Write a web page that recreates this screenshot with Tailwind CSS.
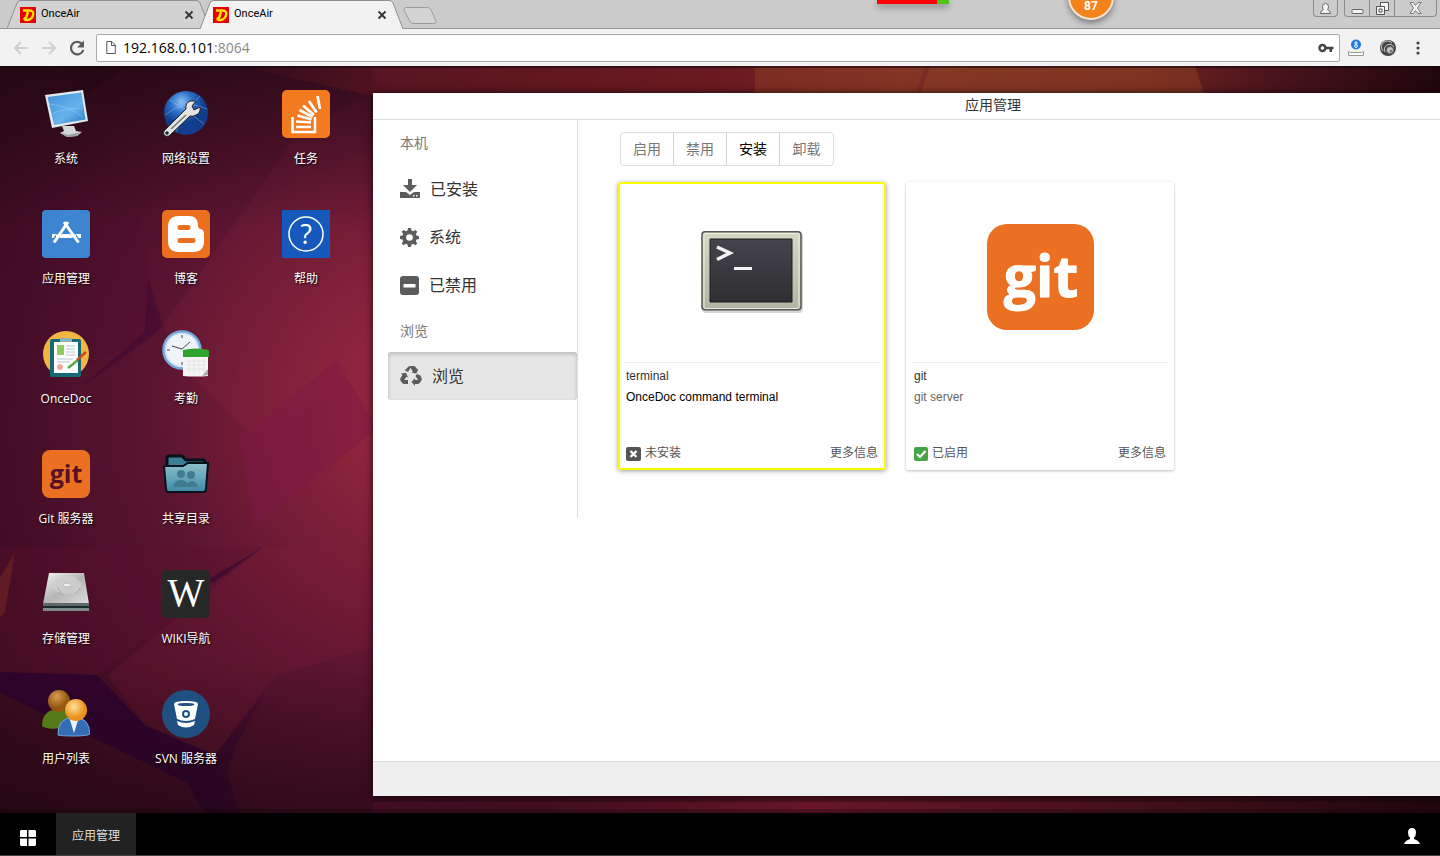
<!DOCTYPE html>
<html lang="zh-CN">
<head>
  <meta charset="UTF-8" />
  <meta name="viewport" content="width=device-width, initial-scale=1.0"/>
  <title>OnceAir</title>
  <script src="https://cdn.jsdelivr.net/npm/@tailwindcss/browser@4"></script>
</head>
<body class="h-screen flex flex-col overflow-hidden bg-black font-['Open_Sans','Noto_Sans_CJK_SC',sans-serif] text-xs">

  <!-- Shared icon shapes -->
  <svg class="hidden">
    <symbol id="favicon" viewBox="0 0 16 16">
      <rect width="16" height="16" fill="#e60000"/>
      <path d="M3 3.500h6c4 0 5 2 4 5s-4 5-7 4.500c-2-.300-2-2 0-2l2-6" fill="none" stroke="#ffe600" stroke-width="2.400"/>
    </symbol>
    <symbol id="close" viewBox="0 0 10 10">
      <path d="M1.500 1.500l7 7M8.500 1.500l-7 7" stroke="#333" stroke-width="1.800"/>
    </symbol>
  </svg>

  <!-- Tab strip -->
  <header class="relative h-7 shrink-0 flex bg-[#cbcbcb] pl-[7px] font-[Roboto,sans-serif] text-[11px]">
    <button class="relative w-[203px] h-[29px] flex items-center pl-[13px] pr-[16px]">
      <svg class="absolute inset-0" width="203" height="28" viewBox="0 0 203 28" fill="#d2d2d2" stroke="#8f8f8f"><path d="M0 28.500L10 3q1-2.500 4-2.500h175q3 0 4 2.500l10 25.500"/></svg>
      <svg class="relative size-4"><use href="#favicon"/></svg>
      <span class="relative flex-1 text-left pl-[5px]">OnceAir</span>
      <svg class="relative size-2.5"><use href="#close"/></svg>
    </button>
    <button class="relative z-10 -ml-[10px] w-[203px] h-[29px] flex items-center pl-[13px] pr-[16px]">
      <svg class="absolute inset-0" width="203" height="29" viewBox="0 0 203 29" fill="#f2f2f2" stroke="#8f8f8f"><path d="M0 29L10 3q1-2.500 4-2.500h175q3 0 4 2.500l10 26"/></svg>
      <svg class="relative size-4"><use href="#favicon"/></svg>
      <span class="relative flex-1 text-left pl-[5px]">OnceAir</span>
      <svg class="relative size-2.5"><use href="#close"/></svg>
    </button>
    <button class="h-[31px]" aria-label="新标签页">
      <svg width="34" height="18" viewBox="0 0 34 18" fill="#d3d3d3" stroke="#9c9c9c"><path d="M1 3q-.5-2.500 2-2.500h21q3 0 4 2l5 12q.5 2-2 2h-20q-3 0-4-2z"/></svg>
    </button>

    <div class="ml-auto mr-[3px] flex items-start gap-[6px]">
      <button class="w-[25px] h-[17px] border border-t-0 border-[#8c8c8c] rounded-b grid place-items-center" aria-label="用户">
        <svg width="13" height="13" viewBox="0 0 13 13" fill="#f4f4f4" stroke="#666"><path d="M1.500 11.500q0-3 3-4-1-1-1-3 0-3 3-3t3 3q0 2-1 3 3 1 3 4z"/></svg>
      </button>
      <div class="h-[17px] flex border border-t-0 border-[#8c8c8c] rounded-b">
        <button class="w-[25px] grid place-items-center border-r border-[#8c8c8c]" aria-label="最小化">
          <svg width="13" height="13" viewBox="0 0 13 13" fill="#f4f4f4" stroke="#666"><rect x="1" y="7.500" width="11" height="4" rx="1"/></svg>
        </button>
        <button class="w-[25px] grid place-items-center border-r border-[#8c8c8c]" aria-label="还原">
          <svg width="13" height="13" viewBox="0 0 13 13" fill="#f4f4f4" stroke="#555"><path d="M4.500.5h8v8h-8z"/><path d="M.5 4.500h8v8h-8zM3 7h3v3H3z"/></svg>
        </button>
        <button class="w-[41px] grid place-items-center" aria-label="关闭">
          <svg width="13" height="12" viewBox="0 0 13 12" fill="#f4f4f4" stroke="#777"><path d="M1 .5h3l2.500 3 2.500-3h3L8.500 6l3.500 5.500H9l-2.500-3-2.500 3H1L4.500 6z"/></svg>
        </button>
      </div>
    </div>

    <!-- Floating desktop widgets -->
    <div class="absolute left-[877px] top-0 w-[72px] h-1 flex shadow-[0_3px_6px_#0006]"><span class="flex-1 bg-[#f00]"></span><span class="w-3 bg-[#4fc420]"></span></div>
    <div class="absolute left-[1068px] -top-[26px] size-[46px] rounded-full border-2 border-[#f6e3d2] bg-[#f5831c] shadow-[0_3px_6px_#0006] flex items-end justify-center pb-1 text-white font-bold text-xs">87</div>
  </header>

  <!-- Toolbar -->
  <nav class="h-[38px] shrink-0 flex items-center bg-[#f2f2f2] border-t border-[#949494] pl-3 pr-4">
    <div class="flex gap-[10px] w-[84px]">
      <button aria-label="后退"><svg width="18" height="18" viewBox="0 0 18 18" fill="none" stroke="#cfcfcf" stroke-width="2"><path d="M16 9H3M9 3L3 9l6 6"/></svg></button>
      <button aria-label="前进"><svg width="18" height="18" viewBox="0 0 18 18" fill="none" stroke="#cfcfcf" stroke-width="2"><path d="M2 9h13M9 3l6 6-6 6"/></svg></button>
      <button aria-label="刷新"><svg width="18" height="18" viewBox="0 0 18 18"><path d="M14.500 5.500A6.300 6.300 0 1 0 15.300 11" fill="none" stroke="#5a5a5a" stroke-width="2.200"/><path d="M16 1.500v7H9z" fill="#5a5a5a"/></svg></button>
    </div>
    <div class="flex-1 h-7 flex items-center bg-white border border-[#a9a9a9] rounded-[2px] pl-[9px] pr-[5px]">
      <svg width="10" height="13" viewBox="0 0 10 13" fill="none" stroke="#555"><path d="M.8.500h5l3.500 3.500v8.500H.8z"/><path d="M5.500.500V4.500h4"/></svg>
      <div class="flex-1 pl-[7px] text-sm leading-4 text-black">192.168.0.101<span class="text-[#8a8a8a]">:8064</span></div>
      <svg width="16" height="12" viewBox="0 0 16 12" fill="none" stroke="#444"><circle cx="4.500" cy="6" r="3" stroke-width="2.400"/><path d="M8 6h7.500M12.800 6v4" stroke-width="2.600"/></svg>
    </div>
    <div class="flex items-center pl-2 gap-4">
      <svg width="16" height="18" viewBox="0 0 16 18"><circle cx="8" cy="5.500" r="5" fill="#1f7ae0"/><circle cx="8" cy="4" r="1.200" fill="none" stroke="#fff"/><circle cx="8" cy="7" r="1.400" fill="none" stroke="#fff"/><path d="M.5 12.500v4h15v-4l-2 1h-11z" fill="#fff" stroke="#999"/></svg>
      <svg width="16" height="16" viewBox="0 0 16 16"><circle cx="8" cy="8" r="8" fill="#444"/><path d="M3 11a6 6 0 0 1 9-8M5 12a5 5 0 0 1 9-5" fill="none" stroke="#ccc"/><circle cx="10" cy="10" r="3.500" fill="#ccc" stroke="#666"/><circle cx="11" cy="11" r="1.500" fill="#777"/></svg>
      <button aria-label="菜单"><svg width="12" height="16" viewBox="0 0 12 16" fill="#444"><circle cx="6" cy="3" r="1.600"/><circle cx="6" cy="8" r="1.600"/><circle cx="6" cy="13" r="1.600"/></svg></button>
    </div>
  </nav>

  <!-- Desktop -->
  <main class="relative flex-1 min-h-0 overflow-hidden bg-[#4c1023]">
    <!-- Wallpaper -->
    <svg class="absolute inset-0 w-full h-full" viewBox="0 66 1440 747" preserveAspectRatio="none">
      <defs>
        <radialGradient id="wall" gradientUnits="userSpaceOnUse" cx="430" cy="410" r="620">
          <stop offset="0" stop-color="#9c2a40"/><stop offset=".12" stop-color="#8e253c"/><stop offset=".28" stop-color="#761d37"/><stop offset=".45" stop-color="#5a1430"/><stop offset=".7" stop-color="#430d25"/><stop offset="1" stop-color="#2c0916"/>
        </radialGradient>
        <linearGradient id="strip" x1="0" x2="1" y1="0" y2="0">
          <stop offset="0" stop-color="#561420" stop-opacity="0"/><stop offset=".15" stop-color="#5a151f"/><stop offset=".4" stop-color="#6a1a20"/><stop offset=".55" stop-color="#7a2c26"/><stop offset=".75" stop-color="#70231f"/><stop offset=".86" stop-color="#4a141c"/><stop offset="1" stop-color="#20070c"/>
        </linearGradient>
        <linearGradient id="low" x1="0" x2="1" y1="0" y2="0">
          <stop offset="0" stop-color="#35081a" stop-opacity="0"/><stop offset=".25" stop-color="#481020"/><stop offset=".45" stop-color="#6a1628"/><stop offset=".7" stop-color="#4a121c"/><stop offset="1" stop-color="#22070d"/>
        </linearGradient>
        <linearGradient id="shade" x1="0" x2="0" y1="0" y2="1">
          <stop offset="0" stop-color="#14060c" stop-opacity=".5"/><stop offset=".22" stop-color="#14060c" stop-opacity="0"/><stop offset=".8" stop-color="#14060c" stop-opacity="0"/><stop offset="1" stop-color="#14060c" stop-opacity=".4"/>
        </linearGradient>
        <linearGradient id="fade" x1="0" x2="1" y1="0" y2="0">
          <stop offset="0" stop-color="#2b0030" stop-opacity=".75"/><stop offset=".75" stop-color="#2b0030" stop-opacity=".75"/><stop offset="1" stop-color="#2b0030" stop-opacity="0"/>
        </linearGradient>
      </defs>
      <path fill="url(#wall)" d="M0 66h1440v747H0z"/>
      <path fill="#a8304a" opacity=".12" d="M163 326L300 130l80-40v280l-130 65-60-60z"/>
      <path fill="#7e1748" opacity=".4" d="M240 438l97-78 36 62v10L253 527z"/>
      <path fill="#4a0a38" opacity=".18" d="M0 265l140-50 10 70-2 50L0 410z"/>
      <path fill="#5c1030" opacity=".3" d="M0 547h263l-156 122-10 6-97-3z"/>
      <path fill="#8c2038" opacity=".18" d="M263 547h110v100l-98 29-60 84-70-35-38-50z"/>
      <path fill="#3a0634" opacity=".45" d="M148 278l15 48-13 12-73 52 68-58z"/>
      <path fill="#33042e" opacity=".6" d="M263 547l-50 36-4-4z"/>
      <path fill="url(#fade)" d="M0 672l97 3 48 50 70 30 60-79-40 72-8 25 13 40h-35l-18-30L0 693z"/>
      <path fill="#7a2a20" opacity=".5" d="M0 578l15-26-10 60-5 5z"/>
      <path fill="url(#shade)" d="M0 66h373v747H0z"/>
      <path fill="#220610" opacity=".5" d="M70 66h60l-55 34z"/>
      <path fill="url(#strip)" d="M240 66h1200v30H373z"/>
      <path fill="#8c3c24" opacity=".5" d="M755 66h170l-10 30H755z"/>
      <path fill="#964a26" opacity=".4" d="M930 66h265l10 30H920z"/>
      <path fill="#14060c" opacity=".6" d="M0 66h1440v2H0z"/>
      <path fill="url(#low)" d="M300 790h1140v23H300z"/>
      <path fill="#14060c" opacity=".35" d="M373 796h1067v6H373zM0 809h1440v4H0z"/>
    </svg>

    <!-- Shortcuts -->
    <div class="relative pl-[6px] grid grid-flow-col grid-rows-[repeat(6,120px)] auto-cols-[120px] w-max text-white leading-5 [text-shadow:1px_1px_2px_#000]">
      <a href="#" class="row-start-1 col-start-1 flex flex-col items-center gap-[11px] pt-6">
        <svg width="48" height="48" viewBox="0 0 48 48"><defs><linearGradient id="scr" x1="0" y1="0" x2="1" y2="1"><stop stop-color="#3f93d8"/><stop offset=".6" stop-color="#66b2ec"/><stop offset="1" stop-color="#2879c4"/></linearGradient></defs><path d="M20 36h12l2 5 6 1-5 4-10 1-7-4 4-2z" fill="#d5d8d8"/><path d="M18 42l8 3 13-3-4 4-10 1z" fill="#9aa0a0"/><path d="M3 5L41 0l5 31-36 7z" fill="#e4eaec"/><path d="M5.500 7L39.500 2.500 43.500 29.500 12 35z" fill="url(#scr)"/><path d="M7 14q20 2 34 13M8 25q14-8 32-6" stroke="#a5daff" fill="none" opacity=".4"/></svg>
        <span>系统</span>
      </a>
      <a href="#" class="row-start-2 col-start-1 flex flex-col items-center gap-[11px] pt-6">
        <svg width="48" height="48" viewBox="0 0 48 48" fill="none" stroke="#fff" stroke-width="3"><rect width="48" height="48" rx="4" fill="#3d85d0" stroke="none"/><path d="M10 26h29" stroke-width="4"/><path d="M26 12L11 33M22 12l15 21" stroke="#3d85d0" stroke-width="5"/><path d="M26 12L12 32.500M22 12l14.500 20.500M14 26h20"/></svg>
        <span>应用管理</span>
      </a>
      <a href="#" class="row-start-3 col-start-1 flex flex-col items-center gap-[11px] pt-6">
        <svg width="48" height="48" viewBox="0 0 48 48"><circle cx="24" cy="24" r="23" fill="#f2b544"/><rect x="8" y="9" width="31" height="38" rx="2" fill="#176a73"/><path d="M12 12h24v31H12z" fill="#fff"/><path d="M18 8h12v4H18z" fill="#8fb2b8"/><path d="M15 15h7v10h-7z" fill="#93cc5f"/><path d="M24 16h9M24 19h9M24 22h9M24 25h9M15 29h16M15 32h13" stroke="#b8c2d4"/><circle cx="18" cy="37" r="3" fill="#f4a7a0"/><path d="M26 38l10-8" stroke="#5aa84a" stroke-width="2.500"/><path d="M35 30l9-8" stroke="#c74a22" stroke-width="2.500"/></svg>
        <span>OnceDoc</span>
      </a>
      <a href="#" class="row-start-4 col-start-1 flex flex-col items-center gap-[11px] pt-6">
        <svg width="48" height="48" viewBox="0 0 48 48"><rect width="48" height="48" rx="8" fill="#ec7021"/><text x="24" y="33" text-anchor="middle" font-family="Open Sans" font-weight="700" font-size="25" fill="#551126" style="text-shadow:none">git</text></svg>
        <span>Git 服务器</span>
      </a>
      <a href="#" class="row-start-5 col-start-1 flex flex-col items-center gap-[11px] pt-6">
        <svg width="48" height="48" viewBox="0 0 48 48"><defs><linearGradient id="disk" x1="0" y1="0" x2="1" y2="1"><stop stop-color="#f4f4f4"/><stop offset=".5" stop-color="#b5b5b5"/><stop offset="1" stop-color="#dedede"/></linearGradient></defs><path d="M7 3h35l5 31H1z" fill="url(#disk)"/><ellipse cx="25" cy="15" rx="14" ry="9" fill="#cfcfcf" opacity=".8"/><ellipse cx="25" cy="15" rx="4" ry="2" fill="#eee" stroke="#bbb"/><path d="M21 25l-6-8M34 24l4-6" stroke="#aaa"/><path d="M1 33h46v3H1z" fill="#5e6766"/><path d="M1 36h46v2H1z" fill="#182c2b"/><path d="M1 38h46v3H1z" fill="#7c8a88"/></svg>
        <span>存储管理</span>
      </a>
      <a href="#" class="row-start-6 col-start-1 flex flex-col items-center gap-[11px] pt-6">
        <svg width="48" height="48" viewBox="0 0 48 48"><defs><radialGradient id="h1" cx=".4" cy=".3"><stop stop-color="#d99a55"/><stop offset="1" stop-color="#94570f"/></radialGradient><radialGradient id="h2" cx=".4" cy=".35"><stop stop-color="#ffe0a0"/><stop offset="1" stop-color="#ec921a"/></radialGradient></defs><path d="M0 36q0-16 16-17 11 0 14 12l-12 7q-12 2-18-2z" fill="#557a1a"/><circle cx="17" cy="11" r="11" fill="url(#h1)"/><path d="M16 45q-1-17 16-18 15 0 16 17-3 2-16 2t-16-1z" fill="#356db4" stroke="#6fa4dc"/><path d="M27 27l5 16 5-16z" fill="#eef4ff"/><circle cx="34" cy="20" r="11" fill="url(#h2)"/></svg>
        <span>用户列表</span>
      </a>
      <a href="#" class="row-start-1 col-start-2 flex flex-col items-center gap-[11px] pt-6">
        <svg width="48" height="48" viewBox="0 0 48 48"><defs><radialGradient id="globe" cx=".4" cy=".25"><stop stop-color="#8dc3f4"/><stop offset=".5" stop-color="#2c6fc8"/><stop offset="1" stop-color="#123d8c"/></radialGradient></defs><circle cx="24" cy="23" r="22" fill="url(#globe)"/><path d="M3 25q20-17 42-6M8 10q20 12 34 24M14 42Q22 22 38 6" fill="none" stroke="#9bd0ff" opacity=".4"/><path d="M2 41l22-22q-1-6 4-8l6 0-4 5 2 4 6-3q1 6-4 8-3 2-6 1L7 46q-3 1-5-1-1-2 0-4z" fill="#e4e4e4" stroke="#222"/><path d="M9 39l15-14" stroke="#777" stroke-width="1.500"/><circle cx="5" cy="43" r="1.800" fill="#123"/></svg>
        <span>网络设置</span>
      </a>
      <a href="#" class="row-start-2 col-start-2 flex flex-col items-center gap-[11px] pt-6">
        <svg width="48" height="48" viewBox="0 0 48 48"><rect width="48" height="48" rx="5" fill="#ec6f20"/><path d="M17 6h10q9 0 9 9 0 4 3 4 3 1 3 5v7q0 11-11 11H17Q6 42 6 31V17Q6 6 17 6z" fill="#fff"/><path d="M18 17.500h8M18 30.500h13" stroke="#ec6f20" stroke-width="5" stroke-linecap="round"/></svg>
        <span>博客</span>
      </a>
      <a href="#" class="row-start-3 col-start-2 flex flex-col items-center gap-[11px] pt-6">
        <svg width="48" height="48" viewBox="0 0 48 48"><circle cx="20" cy="20" r="18.500" fill="#eef4fa" stroke="#75a9e0" stroke-width="2.500"/><circle cx="20" cy="20" r="16.500" fill="none" stroke="#c8dcf2"/><path d="M20 19L10 16M20 19l8-7M20 5v3M20 32v3M5 20h3" stroke="#445" fill="none"/><path d="M21 22h25v24q-12 1-25 0z" fill="#f5f5f5"/><path d="M21 20q12-3 26 0v7H21z" fill="#2fa32c"/><path d="M24 31h20M24 35h20M24 39h20M27 28v15M32 28v15M37 28v15M42 28v15" stroke="#e4e4e4"/><path d="M46 39l-6 7 6-1z" fill="#aaa"/></svg>
        <span>考勤</span>
      </a>
      <a href="#" class="row-start-4 col-start-2 flex flex-col items-center gap-[11px] pt-6">
        <svg width="48" height="48" viewBox="0 0 48 48"><defs><linearGradient id="fold" x1="0" y1="0" x2="0" y2="1"><stop stop-color="#8fc0cc"/><stop offset="1" stop-color="#3f8aa6"/></linearGradient></defs><path d="M5 8q0-2 2-2h13l4 4h17q2 0 2 3v27H5z" fill="#3c7d98" stroke="#06121a" stroke-width="3"/><path d="M2 16h19l5-3h20l-2 26q0 3-3 3H6q-2 0-2-3z" fill="url(#fold)" stroke="#06121a" stroke-width="2"/><g fill="#3f7c92"><circle cx="19" cy="24" r="4"/><circle cx="29" cy="25" r="4"/><path d="M11 37q1-7 8-7t7 7zM25 37q0-6 5-6t6 6z"/></g></svg>
        <span>共享目录</span>
      </a>
      <a href="#" class="row-start-5 col-start-2 flex flex-col items-center gap-[11px] pt-6">
        <svg width="48" height="48" viewBox="0 0 48 48"><rect width="48" height="48" rx="4" fill="#262828"/><text x="24" y="36" text-anchor="middle" font-family="Liberation Serif" font-size="39" fill="#fff" style="text-shadow:none">W</text></svg>
        <span>WIKI导航</span>
      </a>
      <a href="#" class="row-start-6 col-start-2 flex flex-col items-center gap-[11px] pt-6">
        <svg width="48" height="48" viewBox="0 0 48 48"><circle cx="24" cy="24" r="24" fill="#205081"/><path d="M12 14q0-3 12-3t12 3l-3 15q-9 4-18 0zM15 31q9 4 18 0l-1 4q-8 5-16 0z" fill="#fff"/><ellipse cx="24" cy="14.500" rx="8.500" ry="1.600" fill="#205081"/><circle cx="24" cy="24" r="3" fill="#fff" stroke="#205081" stroke-width="2"/></svg>
        <span>SVN 服务器</span>
      </a>
      <a href="#" class="row-start-1 col-start-3 flex flex-col items-center gap-[11px] pt-6">
        <svg width="48" height="48" viewBox="0 0 48 48" fill="none" stroke="#fff"><rect width="48" height="48" rx="5" fill="#f47a20" stroke="none"/><path d="M10.500 27v15h22.500V27" stroke-width="2.500"/><path d="M14 37h15M14 31.500l15 1M15.500 25.500l14 4M17.500 20l13 7M21 15.500l11 9.500M27 11l7.500 11.500M35.500 6l2.500 13" stroke-width="2.700"/></svg>
        <span>任务</span>
      </a>
      <a href="#" class="row-start-2 col-start-3 flex flex-col items-center gap-[11px] pt-6">
        <svg width="48" height="48" viewBox="0 0 48 48"><rect width="48" height="48" fill="#1459bb"/><circle cx="24" cy="24" r="17" fill="none" stroke="#fff" stroke-width="1.500"/><text x="24" y="34" text-anchor="middle" font-family="Open Sans" font-size="27" fill="#fff" style="text-shadow:none">?</text></svg>
        <span>帮助</span>
      </a>
    </div>

    <!-- App manager window -->
    <section class="absolute left-[373px] top-[27px] bottom-[17px] w-[1240px] flex flex-col bg-white shadow-[0_0_8px_#000a] text-[#333]">
      <h1 class="h-[27px] shrink-0 border-b border-[#dedede] text-center text-sm leading-6">应用管理</h1>
      <div class="flex-1 flex items-start">
        <aside class="w-[205px] h-[398px] border-r border-[#dedede] pl-[15px] text-base text-[#333]">
          <h2 class="h-[45px] pl-3 flex items-center text-sm text-[#777]">本机</h2>
          <a href="#" class="h-12 pl-3 flex items-center gap-2.5">
            <svg width="20" height="20" viewBox="0 0 20 20" fill="#5c5c5c"><path d="M8 0h4v6h5l-7 7-7-7h5z"/><path d="M0 13h6l4 3 4-3h6v6H0z"/><path d="M13 16h1.500v1.500H13zM16 16h1.500v1.500H16z" fill="#fff"/></svg>
            <span>已安装</span>
          </a>
          <a href="#" class="h-12 pl-3 flex items-center gap-2.5">
            <svg width="19" height="19" viewBox="0 0 20 20"><path d="M8.500 0h3l.6 2.700 1.700.7L16.200 2l2 2-1.500 2.300.7 1.700 2.600.6v3l-2.600.6-.7 1.700 1.500 2.300-2 2-2.400-1.500-1.700.7-.6 2.600h-3l-.6-2.600-1.700-.7L3.800 18.200l-2-2 1.500-2.300-.7-1.700L0 11.500v-3L2.600 8l.7-1.700L1.800 4l2-2 2.400 1.400 1.700-.7z" fill="#5c5c5c"/><circle cx="10" cy="10" r="3.500" fill="#fff"/></svg>
            <span>系统</span>
          </a>
          <a href="#" class="h-12 pl-3 flex items-center gap-2.5">
            <svg width="19" height="19" viewBox="0 0 19 19"><rect width="19" height="19" rx="3" fill="#5c5c5c"/><path d="M3.500 8h12v3.500h-12z" fill="#fff"/></svg>
            <span>已禁用</span>
          </a>
          <h2 class="h-[43px] pl-3 flex items-center text-sm text-[#777]">浏览</h2>
          <a href="#" class="h-12 pl-3 flex items-center gap-2.5 bg-[#e6e6e6] rounded-[3px] shadow-[inset_0_2px_4px_#0003]">
            <svg width="22" height="22" viewBox="0 0 22 22" fill="#5c5c5c"><path d="M7.500 2Q8.300.5 10 .5h4q1.200 0 2 1.500l1 1.800 1.500-.8-2 5-5-.8 1.500-1-2.500-4L8 6.500 4.800 4.800z" transform="translate(0 .5)"/><path d="M1 8.500l5-.8 2 4.800-1.600-.8L4.200 15H8v4H4q-1.500 0-2.300-1.400L.6 15.700q-.8-1.300 0-2.600l1.800-3.200z"/><path d="M17 9l3.300 1.500 1.200 2.500q.6 1.300-.2 2.600l-1.200 2Q19.300 19 18 19h-3v2l-3.500-4L15 13v2h3l-2.500-4z"/></svg>
            <span>浏览</span>
          </a>
        </aside>

        <div class="pl-10 pt-3 font-['Liberation_Sans','Noto_Sans_CJK_SC',sans-serif]">
          <div class="ml-[2px] w-max h-[34px] flex border border-[#dcdcdc] rounded divide-x divide-[#d4d4d4] text-sm text-[#777]">
            <button class="w-[53px]">启用</button>
            <button class="w-[53px]">禁用</button>
            <button class="w-[53px] text-black">安装</button>
            <button class="w-[53px]">卸载</button>
          </div>

          <div class="mt-4 flex gap-5 text-xs">
            <article class="w-[268px] h-[288px] flex flex-col border-2 border-[#fbfb00] rounded-[3px] px-1 shadow-[0_1px_5px_#0006]">
              <div class="h-[178px] shrink-0 grid place-items-center">
                <svg width="104" height="84" viewBox="0 0 104 84"><defs><linearGradient id="term" x1="0" y1="0" x2="0" y2="1"><stop stop-color="#45444c"/><stop offset="1" stop-color="#2f2f33"/></linearGradient><linearGradient id="bezel" x1="0" y1="0" x2="0" y2="1"><stop stop-color="#d7d7c6"/><stop offset="1" stop-color="#b2b3a0"/></linearGradient></defs><rect x="2" y="2" width="101" height="80" rx="4" fill="#bbb" opacity=".6"/><rect x="2" y=".8" width="99" height="78" rx="3" fill="url(#bezel)" stroke="#55584e" stroke-width="1.500"/><rect x="4" y="2.500" width="95" height="75" rx="2" fill="none" stroke="#eeeee2"/><path d="M10 8h82v63H10z" fill="url(#term)" stroke="#1c1c20"/><path d="M17 16l13 6-13 6.500" fill="none" stroke="#f3f3f6" stroke-width="3.500"/><path d="M34 37.500h18" stroke="#f3f3f6" stroke-width="3"/></svg>
              </div>
              <div class="flex-1 border-t border-[#eee] pt-[3px] px-[2px] pb-1 flex flex-col leading-[21px]">
                <h3>terminal</h3>
                <p class="text-black">OnceDoc command terminal</p>
                <div class="mt-auto flex justify-between items-center text-[#555]">
                  <span class="flex items-center gap-1">
                    <svg width="15" height="14" viewBox="0 0 15 14"><rect width="15" height="14" rx="2" fill="#555"/><path d="M4.500 4l6 6M10.500 4l-6 6" stroke="#fff" stroke-width="2.400"/></svg>
                    未安装
                  </span>
                  <a href="#">更多信息</a>
                </div>
              </div>
            </article>

            <article class="w-[268px] h-[288px] flex flex-col border-2 border-white rounded-[3px] px-1 shadow-[0_1px_3px_#0004]">
              <div class="h-[178px] shrink-0 grid place-items-center pt-2">
                <svg width="107" height="106" viewBox="0 0 107 106"><rect width="107" height="106" rx="20" fill="#ec7021"/><text x="54" y="73" text-anchor="middle" font-family="Open Sans" font-weight="700" font-size="57" fill="#fff" stroke="#fff">git</text></svg>
              </div>
              <div class="flex-1 border-t border-[#eee] pt-[3px] px-[2px] pb-1 flex flex-col leading-[21px]">
                <h3>git</h3>
                <p class="text-[#666]">git server</p>
                <div class="mt-auto flex justify-between items-center text-[#555]">
                  <span class="flex items-center gap-1">
                    <svg width="14" height="14" viewBox="0 0 14 14"><rect width="14" height="14" rx="2" fill="#45a545"/><path d="M3 7l3 3 5.500-6" fill="none" stroke="#fff" stroke-width="2.200"/></svg>
                    已启用
                  </span>
                  <a href="#">更多信息</a>
                </div>
              </div>
            </article>
          </div>
        </div>
      </div>
      <footer class="h-[35px] shrink-0 bg-[#efefef] border-t border-[#d8d8d8]"></footer>
    </section>
  </main>

  <!-- Taskbar -->
  <footer class="h-[43px] shrink-0 flex items-center bg-black border-b border-[#444]">
    <button class="w-14 h-full pt-2 flex items-center justify-center" aria-label="开始">
      <svg width="16" height="16" viewBox="0 0 16 16" fill="#fff"><path d="M1 0h6v7H0V1zM8.500 0H15l1 1v6H8.500zM0 8.500h7V16H1l-1-1zM8.500 8.500H16V15l-1 1H8.500z"/></svg>
    </button>
    <button class="w-20 h-full pt-1 bg-[#222] text-[#ddd]">应用管理</button>
    <button class="ml-auto mr-5 pt-1" aria-label="用户">
      <svg width="16" height="16" viewBox="0 0 16 16" fill="#fff"><path d="M8 0q4 0 4 4.500Q12 8 10 9.500v1.500q5 1.500 6 5H0q1-3.500 6-5V9.500Q4 8 4 4.500 4 0 8 0z"/></svg>
    </button>
  </footer>
</body>
</html>
